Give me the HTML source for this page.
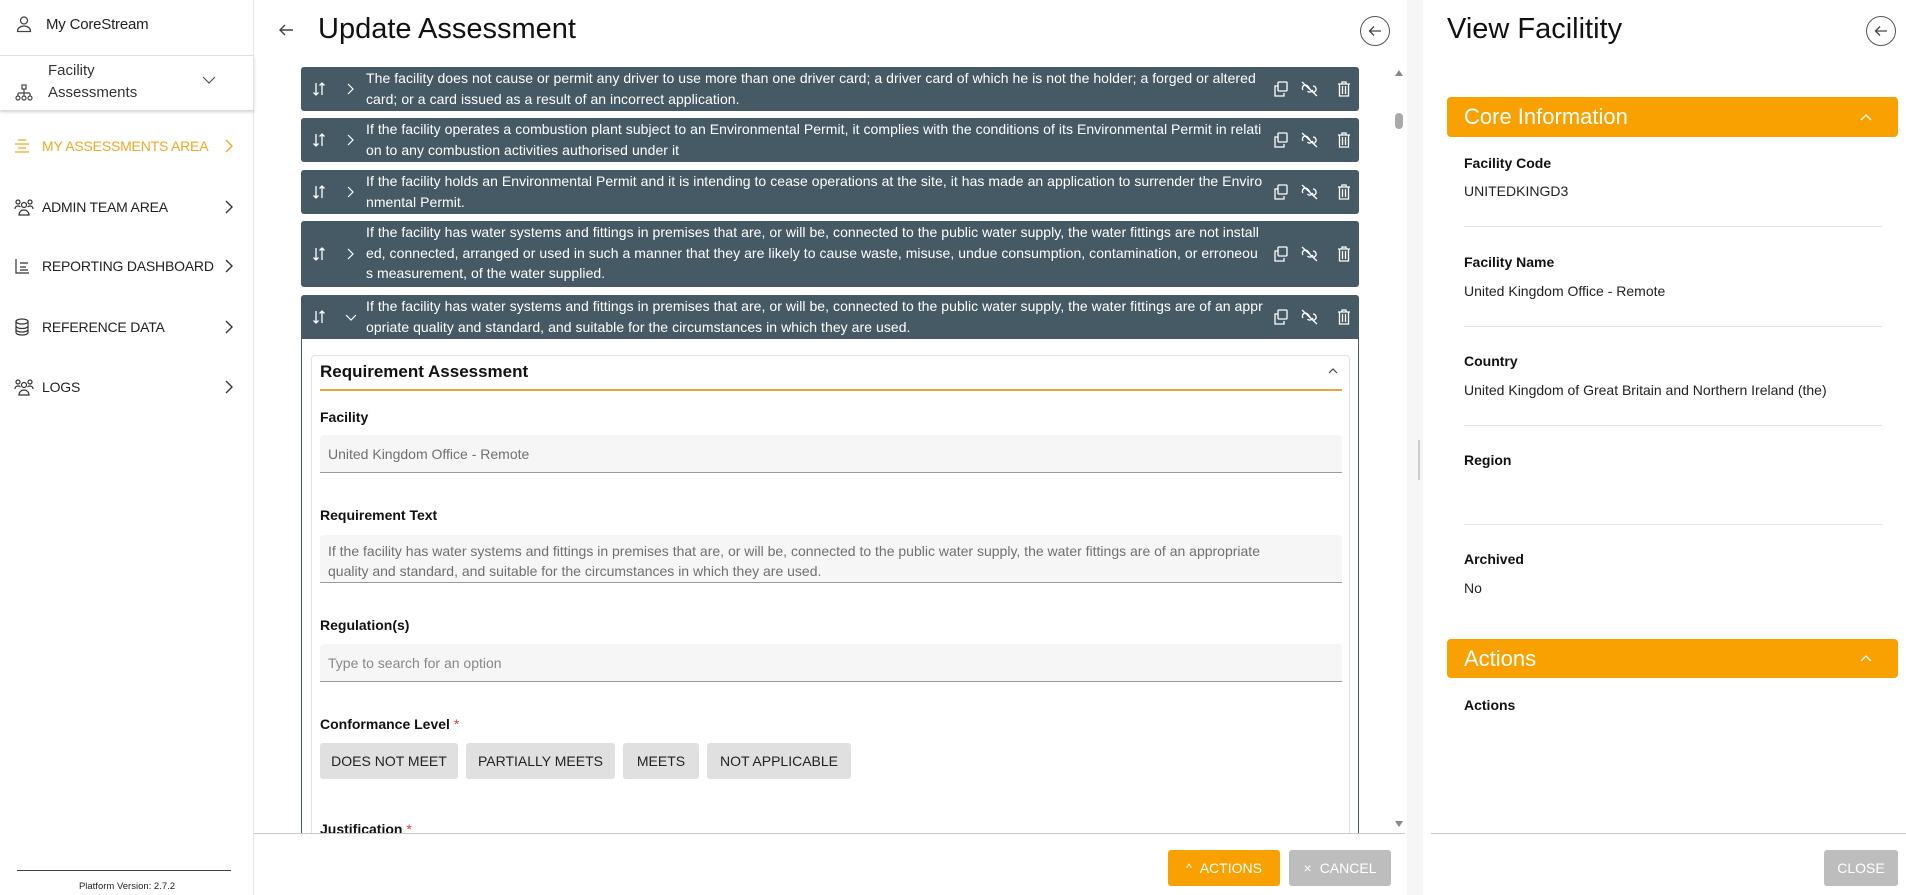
<!DOCTYPE html>
<html><head><meta charset="utf-8"><style>
*{box-sizing:border-box;margin:0;padding:0}
html,body{width:1906px;height:895px;overflow:hidden}
body{background:#fff;font-family:"Liberation Sans",Arial,sans-serif;color:#212121;position:relative}
.abs{position:absolute}
.side{left:0;top:0;width:254px;height:895px;border-right:1px solid #e4e4e4;background:#fff}
.nav{position:absolute;left:14px;font-size:14px;letter-spacing:-0.2px;color:#222;display:flex;align-items:center;width:226px}
.nav svg{margin-right:12px;flex:none}
.nav .chev{position:absolute;right:6px;margin:0}
.row{position:absolute;left:301px;width:1058px;background:#455a64;border-radius:3px;color:#fff;font-size:14px;line-height:20.5px}
.row .t{position:absolute;left:65px;width:898px;word-break:break-all;top:-3px;letter-spacing:0.05px}
.lbl{position:absolute;left:320px;font-size:14px;font-weight:bold;color:#111}
.inp{position:absolute;left:320px;width:1022px;background:#f6f6f6;border-bottom:1px solid #9a9a9a;border-radius:4px 4px 0 0;color:#707070;font-size:14px;padding-left:8px}
.btn{position:absolute;top:743px;height:36px;background:#e0e0e0;border-radius:3px;font-size:14px;color:#222;display:flex;align-items:center;justify-content:center}
.rl{position:absolute;left:1464px;font-size:14px;font-weight:bold;color:#111}
.rv{position:absolute;left:1464px;font-size:14px;color:#222}
.rd{position:absolute;left:1464px;width:418px;height:1px;background:#e3e3e3}
.bar{position:absolute;left:1447px;width:451px;background:#f9a100;border-radius:4px;color:#fff;font-size:22px;padding-left:17px;display:flex;align-items:center}
</style></head><body>

<div class="abs side">
  <div class="nav" style="top:14px;left:14px"><svg width="20" height="20" viewBox="0 0 20 20" fill="none" stroke="#444" stroke-width="1.3"><circle cx="10" cy="6.5" r="3.5"/><path d="M3.5 17.5c0-3.5 3-5.5 6.5-5.5s6.5 2 6.5 5.5z"/></svg><span style="font-size:15px">My CoreStream</span></div>
  <div class="abs" style="left:0;top:55px;width:254px;height:1px;background:#e2e2e2"></div>
  <div class="abs" style="left:0;top:56px;width:254px;height:54px;box-shadow:0 2px 3px rgba(0,0,0,.18)"></div>
  <svg class="abs" style="left:14px;top:84px" width="20" height="18" viewBox="0 0 20 18" fill="none" stroke="#444" stroke-width="1.2"><rect x="8" y="1" width="4" height="4"/><path d="M10 5v4M4 9h12M4 9v3M10 9v3M16 9v3"/><circle cx="4" cy="14" r="2"/><circle cx="10" cy="14" r="2"/><circle cx="16" cy="14" r="2"/></svg>
  <div class="abs" style="left:48px;top:60px;font-size:15px;line-height:22px;color:#333">Facility<br>Assessments</div>
  <svg class="abs" style="left:202px;top:75px" width="14" height="10" viewBox="0 0 14 10" fill="none" stroke="#555" stroke-width="1.2"><path d="M1 2l6 6 6-6"/></svg>

  <div class="nav" style="top:137px;color:#f5a623"><svg width="16" height="18" viewBox="0 0 16 18" fill="none" stroke="#f5a623" stroke-width="1.3"><path d="M4 3h8M1 7h14M4 11h8M1 15h14"/></svg><span>MY ASSESSMENTS AREA</span><svg class="chev" width="10" height="16" viewBox="0 0 10 16" fill="none" stroke="#f5a623" stroke-width="1.4"><path d="M2 2l6 6-6 6"/></svg></div>
  <div class="nav" style="top:198px"><svg width="20" height="18" viewBox="0 0 20 18" fill="none" stroke="#333" stroke-width="1.2"><circle cx="4" cy="4" r="2"/><circle cx="16" cy="4" r="2"/><circle cx="10" cy="7" r="2.5"/><path d="M1 11c0-2 1.5-3 3-3s2 .5 2.5 1M19 11c0-2-1.5-3-3-3s-2 .5-2.5 1M5 17c0-3 2.3-5 5-5s5 2 5 5z"/></svg><span style="margin-left:-4px">ADMIN TEAM AREA</span><svg class="chev" width="10" height="16" viewBox="0 0 10 16" fill="none" stroke="#333" stroke-width="1.4"><path d="M2 2l6 6-6 6"/></svg></div>
  <div class="nav" style="top:257px"><svg width="16" height="18" viewBox="0 0 16 18" fill="none" stroke="#333" stroke-width="1.2"><path d="M2 2v14h13M6 6h8M6 10h6M6 13h8"/></svg><span>REPORTING DASHBOARD</span><svg class="chev" width="10" height="16" viewBox="0 0 10 16" fill="none" stroke="#333" stroke-width="1.4"><path d="M2 2l6 6-6 6"/></svg></div>
  <div class="nav" style="top:318px"><svg width="16" height="18" viewBox="0 0 16 18" fill="none" stroke="#333" stroke-width="1.2"><ellipse cx="8" cy="3.5" rx="6" ry="2.5"/><path d="M2 3.5v11c0 1.4 2.7 2.5 6 2.5s6-1.1 6-2.5v-11M2 8c0 1.4 2.7 2.5 6 2.5s6-1.1 6-2.5M2 11.5c0 1.4 2.7 2.5 6 2.5s6-1.1 6-2.5"/></svg><span>REFERENCE DATA</span><svg class="chev" width="10" height="16" viewBox="0 0 10 16" fill="none" stroke="#333" stroke-width="1.4"><path d="M2 2l6 6-6 6"/></svg></div>
  <div class="nav" style="top:378px"><svg width="20" height="18" viewBox="0 0 20 18" fill="none" stroke="#333" stroke-width="1.2"><circle cx="4" cy="4" r="2"/><circle cx="16" cy="4" r="2"/><circle cx="10" cy="7" r="2.5"/><path d="M1 11c0-2 1.5-3 3-3s2 .5 2.5 1M19 11c0-2-1.5-3-3-3s-2 .5-2.5 1M5 17c0-3 2.3-5 5-5s5 2 5 5z"/></svg><span style="margin-left:-4px">LOGS</span><svg class="chev" width="10" height="16" viewBox="0 0 10 16" fill="none" stroke="#333" stroke-width="1.4"><path d="M2 2l6 6-6 6"/></svg></div>

  <div class="abs" style="left:17px;top:870px;width:214px;height:1px;background:#444"></div>
  <div class="abs" style="left:0;top:881px;width:254px;text-align:center;font-size:9.5px;color:#222">Platform Version: 2.7.2</div>
</div>

<svg class="abs" style="left:278px;top:23px" width="16" height="14" viewBox="0 0 16 14" fill="none" stroke="#444" stroke-width="1.4"><path d="M15 7H2M7 2L2 7l5 5"/></svg>
<div class="abs" style="left:318px;top:13px;font-size:29px;color:#111">Update Assessment</div>
<div class="abs" style="left:1360px;top:16px;width:30px;height:30px;border:1px solid #555;border-radius:50%"></div>
<svg class="abs" style="left:1368px;top:25px" width="14" height="12" viewBox="0 0 14 12" fill="none" stroke="#444" stroke-width="1.3"><path d="M13 6H2M6 1.5L1.5 6 6 10.5"/></svg>

<div class="row" style="top:67px;height:44px"><div class="t" style="top:1px">The facility does not cause or permit any driver to use more than one driver card; a driver card of which he is not the holder; a forged or altered card; or a card issued as a result of an incorrect application.</div></div>
<div class="row" style="top:118px;height:44px"><div class="t" style="top:1px">If the facility operates a combustion plant subject to an Environmental Permit, it complies with the conditions of its Environmental Permit in relation to any combustion activities authorised under it</div></div>
<div class="row" style="top:170px;height:44px"><div class="t" style="top:1px">If the facility holds an Environmental Permit and it is intending to cease operations at the site, it has made an application to surrender the Environmental Permit.</div></div>
<div class="row" style="top:221px;height:66px"><div class="t" style="top:1px">If the facility has water systems and fittings in premises that are, or will be, connected to the public water supply, the water fittings are not installed, connected, arranged or used in such a manner that they are likely to cause waste, misuse, undue consumption, contamination, or erroneous measurement, of the water supplied.</div></div>
<div class="row" style="top:295px;height:44px;border-radius:3px 3px 0 0"><div class="t" style="top:1px">If the facility has water systems and fittings in premises that are, or will be, connected to the public water supply, the water fittings are of an appropriate quality and standard, and suitable for the circumstances in which they are used.</div></div>

<svg width="0" height="0" style="position:absolute"><defs>
<g id="sort" fill="none" stroke="#fff" stroke-width="1.3"><path d="M4 2v12M1.5 11.5L4 14l2.5-2.5M10 14V2M7.5 4.5L10 2l2.5 2.5"/></g>
<g id="copy" fill="none" stroke="#fff" stroke-width="1.3"><rect x="5" y="1" width="9" height="9" rx="1"/><path d="M5 5H2v10h9v-3"/></g>
<g id="unlink" fill="none" stroke="#fff" stroke-width="1.3"><path d="M2 9c-1.5-2 0-5 2.5-5s3.5 3 5 5 3.5 3 5 1 0-5-2.5-5M12 9c-1.5 2-4 3-5.5 1M1 1l15 14"/></g>
<g id="trash" fill="none" stroke="#fff" stroke-width="1.3"><path d="M1 3h12M5 3V1h4v2M2.5 3v12h9V3M5.5 5v8M8.5 5v8"/></g>
</defs></svg>
<svg class="abs" style="left:312px;top:81px" width="14" height="16"><use href="#sort"/></svg>
<svg class="abs" style="left:312px;top:132px" width="14" height="16"><use href="#sort"/></svg>
<svg class="abs" style="left:312px;top:184px" width="14" height="16"><use href="#sort"/></svg>
<svg class="abs" style="left:312px;top:246px" width="14" height="16"><use href="#sort"/></svg>
<svg class="abs" style="left:312px;top:309px" width="14" height="16"><use href="#sort"/></svg>
<svg class="abs" style="left:346px;top:83px" width="8" height="12" fill="none" stroke="#fff" stroke-width="1.2"><path d="M2 1l5 5-5 5"/></svg>
<svg class="abs" style="left:346px;top:134px" width="8" height="12" fill="none" stroke="#fff" stroke-width="1.2"><path d="M2 1l5 5-5 5"/></svg>
<svg class="abs" style="left:346px;top:186px" width="8" height="12" fill="none" stroke="#fff" stroke-width="1.2"><path d="M2 1l5 5-5 5"/></svg>
<svg class="abs" style="left:346px;top:248px" width="8" height="12" fill="none" stroke="#fff" stroke-width="1.2"><path d="M2 1l5 5-5 5"/></svg>
<svg class="abs" style="left:345px;top:313px" width="12" height="8" fill="none" stroke="#fff" stroke-width="1.2"><path d="M1 2l5 5 5-5"/></svg>

<svg class="abs" style="left:1273px;top:81px" width="16" height="16"><use href="#copy"/></svg>
<svg class="abs" style="left:1301px;top:81px" width="17" height="16"><use href="#unlink"/></svg>
<svg class="abs" style="left:1337px;top:81px" width="14" height="16"><use href="#trash"/></svg>
<svg class="abs" style="left:1273px;top:132px" width="16" height="16"><use href="#copy"/></svg>
<svg class="abs" style="left:1301px;top:132px" width="17" height="16"><use href="#unlink"/></svg>
<svg class="abs" style="left:1337px;top:132px" width="14" height="16"><use href="#trash"/></svg>
<svg class="abs" style="left:1273px;top:184px" width="16" height="16"><use href="#copy"/></svg>
<svg class="abs" style="left:1301px;top:184px" width="17" height="16"><use href="#unlink"/></svg>
<svg class="abs" style="left:1337px;top:184px" width="14" height="16"><use href="#trash"/></svg>
<svg class="abs" style="left:1273px;top:246px" width="16" height="16"><use href="#copy"/></svg>
<svg class="abs" style="left:1301px;top:246px" width="17" height="16"><use href="#unlink"/></svg>
<svg class="abs" style="left:1337px;top:246px" width="14" height="16"><use href="#trash"/></svg>
<svg class="abs" style="left:1273px;top:309px" width="16" height="16"><use href="#copy"/></svg>
<svg class="abs" style="left:1301px;top:309px" width="17" height="16"><use href="#unlink"/></svg>
<svg class="abs" style="left:1337px;top:309px" width="14" height="16"><use href="#trash"/></svg>

<div class="abs" style="left:301px;top:339px;width:1058px;height:500px;border-left:1px solid #455a64;border-right:1px solid #455a64"></div>
<div class="abs" style="left:311px;top:355px;width:1039px;height:500px;border:1px solid #e2e2e2;border-radius:4px"></div>
<div class="abs" style="left:320px;top:362px;font-size:17px;font-weight:bold;color:#111">Requirement Assessment</div>
<svg class="abs" style="left:1328px;top:367px" width="10" height="7" fill="none" stroke="#444" stroke-width="1.2"><path d="M1 6l4-4 4 4"/></svg>
<div class="abs" style="left:320px;top:389px;width:1022px;height:2px;background:#e7a93a"></div>

<div class="lbl" style="top:409px">Facility</div>
<div class="inp" style="top:435px;height:38px;line-height:38px">United Kingdom Office - Remote</div>
<div class="lbl" style="top:507px">Requirement Text</div>
<div class="inp" style="top:535px;height:48px;padding-top:6px;line-height:20px">If the facility has water systems and fittings in premises that are, or will be, connected to the public water supply, the water fittings are of an appropriate<br>quality and standard, and suitable for the circumstances in which they are used.</div>
<div class="lbl" style="top:617px">Regulation(s)</div>
<div class="inp" style="top:644px;height:38px;line-height:38px;color:#888">Type to search for an option</div>
<div class="lbl" style="top:716px">Conformance Level <span style="color:#e53935;font-weight:normal">*</span></div>
<div class="btn" style="left:320px;width:138px">DOES NOT MEET</div>
<div class="btn" style="left:466px;width:149px">PARTIALLY MEETS</div>
<div class="btn" style="left:623px;width:76px">MEETS</div>
<div class="btn" style="left:707px;width:144px">NOT APPLICABLE</div>
<div class="lbl" style="top:821px">Justification <span style="color:#e53935;font-weight:normal">*</span></div>

<svg class="abs" style="left:1394px;top:69px" width="10" height="8"><path d="M1 7l4-6 4 6z" fill="#888"/></svg>
<div class="abs" style="left:1395px;top:113px;width:8px;height:16px;background:#aaa;border-radius:4px"></div>
<svg class="abs" style="left:1394px;top:820px" width="10" height="8"><path d="M1 1l4 6 4-6z" fill="#888"/></svg>

<div class="abs" style="left:254px;top:833px;width:1151px;height:62px;border-top:1px solid #c9c9c9;background:#fff"></div>
<div class="abs" style="left:1168px;top:850px;width:112px;height:36px;background:#f9a100;border-radius:3px;color:#fff;font-size:14px;display:flex;align-items:center;justify-content:center"><span style="font-size:12px;margin-right:8px">^</span>ACTIONS</div>
<div class="abs" style="left:1289px;top:850px;width:102px;height:36px;background:#bdbdbd;border-radius:3px;color:#fff;font-size:14px;display:flex;align-items:center;justify-content:center"><span style="margin-right:8px">×</span>CANCEL</div>

<div class="abs" style="left:1407px;top:0;width:16px;height:895px;background:#f6f6f7"></div>
<div class="abs" style="left:1418px;top:440px;width:2px;height:40px;background:#ccc"></div>

<div class="abs" style="left:1447px;top:13px;font-size:29px;color:#111">View Facilitity</div>
<div class="abs" style="left:1866px;top:16px;width:30px;height:30px;border:1px solid #555;border-radius:50%"></div>
<svg class="abs" style="left:1874px;top:25px" width="14" height="12" viewBox="0 0 14 12" fill="none" stroke="#444" stroke-width="1.3"><path d="M13 6H2M6 1.5L1.5 6 6 10.5"/></svg>

<div class="bar" style="top:97px;height:40px">Core Information</div>
<svg class="abs" style="left:1860px;top:113px" width="12" height="8" fill="none" stroke="#fff" stroke-width="1.3"><path d="M1 7l5-5 5 5"/></svg>
<div class="rl" style="top:155px">Facility Code</div>
<div class="rv" style="top:183px">UNITEDKINGD3</div>
<div class="rd" style="top:226px"></div>
<div class="rl" style="top:254px">Facility Name</div>
<div class="rv" style="top:283px">United Kingdom Office - Remote</div>
<div class="rd" style="top:326px"></div>
<div class="rl" style="top:353px">Country</div>
<div class="rv" style="top:382px">United Kingdom of Great Britain and Northern Ireland (the)</div>
<div class="rd" style="top:425px"></div>
<div class="rl" style="top:452px">Region</div>
<div class="rd" style="top:524px"></div>
<div class="rl" style="top:551px">Archived</div>
<div class="rv" style="top:580px">No</div>
<div class="bar" style="top:639px;height:39px">Actions</div>
<svg class="abs" style="left:1860px;top:654px" width="12" height="8" fill="none" stroke="#fff" stroke-width="1.3"><path d="M1 7l5-5 5 5"/></svg>
<div class="rl" style="top:697px">Actions</div>

<div class="abs" style="left:1431px;top:833px;width:475px;height:1px;background:#c9c9c9"></div>
<div class="abs" style="left:1824px;top:850px;width:74px;height:36px;background:#bdbdbd;border-radius:3px;color:#fff;font-size:14px;display:flex;align-items:center;justify-content:center">CLOSE</div>
</body></html>
